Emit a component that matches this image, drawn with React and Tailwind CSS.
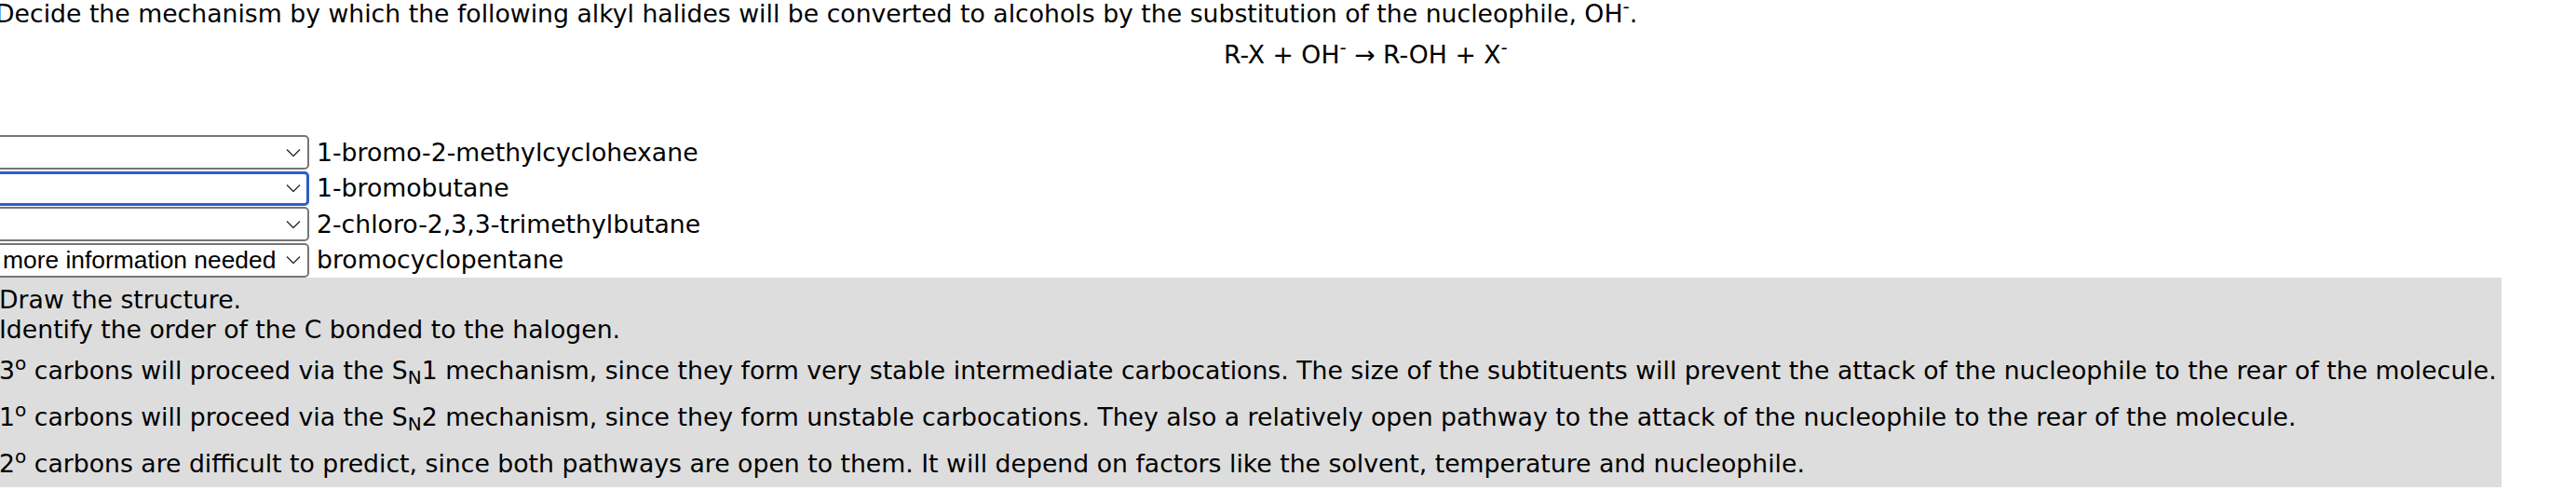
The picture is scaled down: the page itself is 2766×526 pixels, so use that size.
import React from 'react';

// compound names in the order shown on the question
const compounds = [
  { name: '1-bromo-2-methylcyclohexane', value: '' },
  { name: '1-bromobutane', value: '', focused: true },
  { name: '2-chloro-2,3,3-trimethylbutane', value: '' },
  { name: 'bromocyclopentane', value: 'more' },
];

function Chevron() {
  return (
    <svg
      className="pointer-events-none absolute right-[9px] top-1/2 -translate-y-1/2"
      width="16"
      height="9"
      viewBox="0 0 16 9"
      fill="none"
    >
      <path d="M1 1l7 7 7-7" stroke="#333" strokeWidth="1.5" />
    </svg>
  );
}

function MechanismSelect({ value, focused }) {
  return (
    <div className="relative h-[37px] w-[338px] shrink-0">
      <select
        defaultValue={value}
        className={
          focused
            ? "h-full w-full appearance-none rounded-[5px] border-[3px] border-[#2c5ecb] bg-white pl-[6px] font-['Liberation_Sans',Arial,sans-serif] text-[26.4px] text-black outline-none"
            : "h-full w-full appearance-none rounded-[5px] border-2 border-[#767676] bg-white pl-[7px] font-['Liberation_Sans',Arial,sans-serif] text-[26.4px] text-black outline-none"
        }
      >
        <option value=""></option>
        <option value="sn1">SN1</option>
        <option value="sn2">SN2</option>
        <option value="more">more information needed</option>
      </select>
      <Chevron />
    </div>
  );
}

export default function App() {
  return (
    <div className="ml-[-6px] min-h-[526px] bg-white font-['DejaVu_Sans',Verdana,sans-serif] text-[26.7px] leading-[32px] text-black">
      <p className="-mt-[1px] pl-[1px]">
        Decide the mechanism by which the following alkyl halides will be converted to alcohols by the
        substitution of the nucleophile, OH<sup>-</sup>.
      </p>
      <p className="mt-[12px] pl-[1320px]">
        R-X + OH<sup>-</sup> → R-OH + X<sup>-</sup>
      </p>

      {/* answer rows */}
      <div className="mt-[70px] flex flex-col gap-[1.5px]">
        {compounds.map((c) => (
          <div key={c.name} className="flex items-center">
            <MechanismSelect value={c.value} focused={c.focused} />
            <span className="ml-[8px]">{c.name}</span>
          </div>
        ))}
      </div>

      {/* hint box */}
      <div className="w-[2692px] bg-[#dddddd] pl-[5px] pt-[8px]">
        <div>Draw the structure.</div>
        <div>Identify the order of the C bonded to the halogen.</div>
        <div className="mt-[3px] leading-[50px]">
          3<sup>o</sup> carbons will proceed via the S<sub>N</sub>1 mechanism, since they form very stable
          intermediate carbocations. The size of the subtituents will prevent the attack of the nucleophile
          to the rear of the molecule.
        </div>
        <div className="leading-[50px]">
          1<sup>o</sup> carbons will proceed via the S<sub>N</sub>2 mechanism, since they form unstable
          carbocations. They also a relatively open pathway to the attack of the nucleophile to the rear of
          the molecule.
        </div>
        <div className="leading-[50px]">
          2<sup>o</sup> carbons are difficult to predict, since both pathways are open to them. It will
          depend on factors like the solvent, temperature and nucleophile.
        </div>
      </div>
    </div>
  );
}
